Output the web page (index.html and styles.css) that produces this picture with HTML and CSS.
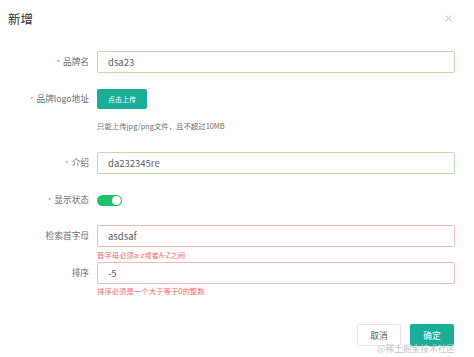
FILE: index.html
```html
<!DOCTYPE html>
<html lang="zh-CN">
<head>
<meta charset="UTF-8" />
<title>新增</title>
<link rel="stylesheet" href="styles.css">
</head>
<body>
  <div class="dialog">
    <!-- Header -->
    <div class="dialog-header">
      <span class="dialog-title">新增</span>
      <svg class="close-icon" width="7" height="7" viewBox="0 0 7 7">
        <path d="M0.5 0.5 L6.5 6.5 M6.5 0.5 L0.5 6.5" stroke="#b4b4b4" stroke-width="0.9" />
      </svg>
    </div>

    <!-- Form -->
    <form class="form">
      <div class="form-item item-name">
        <label class="form-label"><span class="req">*</span>品牌名</label>
        <div class="form-content">
          <input class="input is-success" type="text" value="dsa23">
        </div>
      </div>

      <div class="form-item item-logo">
        <label class="form-label"><span class="req">*</span>品牌logo地址</label>
        <div class="form-content">
          <button type="button" class="upload-btn">点击上传</button>
          <div class="upload-tip">只能上传jpg/png文件，且不超过10MB</div>
        </div>
      </div>

      <div class="form-item item-desc">
        <label class="form-label"><span class="req">*</span>介绍</label>
        <div class="form-content">
          <input class="input is-success" type="text" value="da232345re">
        </div>
      </div>

      <div class="form-item item-status">
        <label class="form-label"><span class="req">*</span>显示状态</label>
        <div class="form-content">
          <span class="switch"><span class="switch-knob"></span></span>
        </div>
      </div>

      <div class="form-item item-letter">
        <label class="form-label">检索首字母</label>
        <div class="form-content">
          <input class="input is-error" type="text" value="asdsaf">
          <div class="error-text">首字母必须a-z或者A-Z之间</div>
        </div>
      </div>

      <div class="form-item item-sort">
        <label class="form-label">排序</label>
        <div class="form-content">
          <input class="input is-error" type="text" value="-5">
          <div class="error-text">排序必须是一个大于等于0的整数</div>
        </div>
      </div>
    </form>

    <!-- Footer -->
    <div class="dialog-footer">
      <button type="button" class="btn btn-default">取消</button>
      <button type="button" class="btn btn-primary">确定</button>
      <span class="watermark">@稀土掘金技术社区</span>
    </div>
  </div>
</body>
</html>
```

FILE: styles.css
```css
* {
  box-sizing: border-box;
}
html, body {
  margin: 0;
  padding: 0;
  background: #fff;
  font-family: "Noto Sans CJK SC", "Noto Sans", sans-serif;
  color: #606266;
}

.dialog {
  width: 474px;
  height: 357px;
  padding: 0 19px 0 8px;
  overflow: hidden;
}

/* Header */
.dialog-header {
  height: 51px;
  padding-top: 10px;
  display: flex;
  justify-content: space-between;
  align-items: flex-start;
}
.dialog-title {
  font-size: 12.5px;
  line-height: 17px;
  color: #303133;
}
.close-icon {
  margin-top: 5px;
  margin-right: 3px;
}

/* Form */
.form-item {
  display: flex;
  gap: 8px;
}
.form-label {
  width: 81px;
  height: 22px;
  flex-shrink: 0;
  text-align: right;
  font-size: 8.7px;
  line-height: 22px;
  color: #6b6e73;
  white-space: nowrap;
}
.req {
  color: #f56c6c;
  font-size: 7px;
  line-height: 1;
  margin-right: 3px;
}
.form-content {
  flex: 1;
}

.item-logo { margin-top: 16px; }
.item-desc { margin-top: 21px; }
.item-status { margin-top: 15px; }
.item-letter { margin-top: 14px; }
.item-sort { margin-top: 3px; }

.item-logo .form-label {
  height: 20px;
  line-height: 20px;
}

.input {
  display: block;
  width: 100%;
  height: 22px;
  padding: 0 10px;
  border: 1px solid #dcdfe6;
  border-radius: 2px;
  font-family: inherit;
  font-size: 9.5px;
  color: #606266;
  outline: none;
  background: #fff;
}
.input.is-success {
  border-color: #bcdeaa;
}
.input.is-error {
  border-color: #f4baba;
}

.upload-btn {
  display: block;
  width: 50px;
  height: 20px;
  border: none;
  border-radius: 2px;
  background: #1aae99;
  color: #fff;
  font-family: inherit;
  font-size: 7px;
  padding: 0;
}
.upload-tip {
  margin-top: 12px;
  height: 10px;
  font-size: 7.4px;
  line-height: 10px;
  color: #6b6e73;
}

.item-status .form-content {
  height: 22px;
  display: flex;
  align-items: center;
}
.switch {
  position: relative;
  display: inline-block;
  width: 25px;
  height: 11px;
  border-radius: 6px;
  background: #1ec26b;
}
.switch-knob {
  position: absolute;
  top: 1px;
  right: 1px;
  width: 9px;
  height: 9px;
  border-radius: 50%;
  background: #fff;
}

.error-text {
  margin-top: 4px;
  height: 8px;
  font-size: 7.4px;
  line-height: 8px;
  color: #f56c6c;
}
.item-sort .error-text {
  margin-top: 3px;
}

/* Footer */
.dialog-footer {
  position: relative;
  margin-top: 29px;
  display: flex;
  justify-content: flex-end;
  gap: 9px;
  padding-right: 1px;
}
.btn {
  width: 44px;
  height: 22px;
  border-radius: 2px;
  font-family: inherit;
  font-size: 8.7px;
  padding: 0;
}
.btn-default {
  background: #fff;
  border: 1px solid #e4e6ea;
  color: #606266;
}
.btn-primary {
  background: #1aae99;
  border: none;
  color: #fff;
}
.watermark {
  position: absolute;
  right: 0;
  top: 20px;
  font-size: 8.7px;
  line-height: 10px;
  color: #c4c4c4;
  white-space: nowrap;
}
```
